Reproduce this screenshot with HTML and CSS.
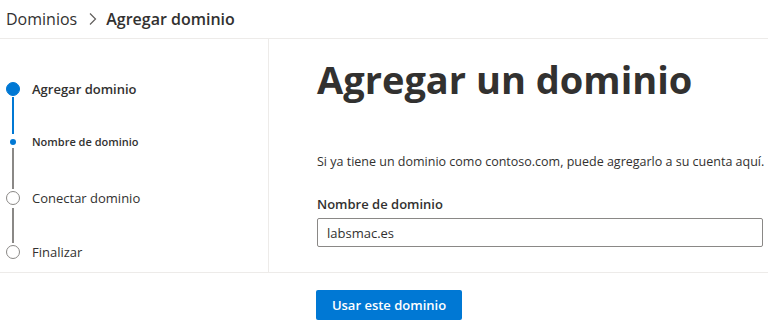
FILE: index.html
```html
<!DOCTYPE html>
<html lang="es">
<head>
    <meta charset="UTF-8">
    <meta name="viewport" content="width=device-width, initial-scale=1.0">
    <title>Agregar dominio</title>
    <link rel="stylesheet" href="styles.css">
</head>
<body>
    <div class="breadcrumb">
        <span class="crumb">Dominios</span>
        <svg class="chevron" width="10" height="14" viewBox="0 0 10 14"><path d="M2 1.5 L7.5 7 L2 12.5" fill="none" stroke="#605e5c" stroke-width="1.2"/></svg>
        <span class="crumb current">Agregar dominio</span>
    </div>

    <div class="wizard">
        <div class="steps">
            <div class="step step-1">
                <div class="marker">
                    <span class="circle filled"></span>
                    <span class="line active"></span>
                </div>
                <span class="label bold">Agregar dominio</span>
            </div>
            <div class="step step-2">
                <div class="marker">
                    <span class="dot"></span>
                    <span class="line"></span>
                </div>
                <span class="label sub">Nombre de dominio</span>
            </div>
            <div class="step step-3">
                <div class="marker">
                    <span class="circle"></span>
                    <span class="line"></span>
                </div>
                <span class="label">Conectar dominio</span>
            </div>
            <div class="step step-4">
                <div class="marker">
                    <span class="circle"></span>
                </div>
                <span class="label">Finalizar</span>
            </div>
        </div>

        <div class="content">
            <h1>Agregar un dominio</h1>
            <p class="desc">Si ya tiene un dominio como contoso.com, puede agregarlo a su cuenta aquí.</p>
            <label for="domain" class="field-label">Nombre de dominio</label>
            <input type="text" id="domain" value="labsmac.es">
        </div>
    </div>

    <div class="footer">
        <button class="primary">Usar este dominio</button>
    </div>
</body>
</html>
```

FILE: styles.css
```css
body{
    margin: 0;
    font-family: "Open Sans", "Noto Sans", Arial, sans-serif;
    color: #323130;
    background: #fff;
    overflow: hidden;
}

.breadcrumb{
    height: 38px;
    display: flex;
    align-items: center;
    padding-left: 6px;
    border-bottom: 1px solid #edebe9;
    font-size: 16px;
}
.crumb{
    color: #323130;
}
.crumb.current{
    font-weight: 600;
}
.chevron{
    margin: 0 8px 0 11px;
}

.wizard{
    display: flex;
    height: 233px;
    border-bottom: 1px solid #edebe9;
}

.steps{
    width: 269px;
    border-right: 1px solid #edebe9;
    padding-top: 43px;
    box-sizing: border-box;
}
.step{
    display: flex;
    gap: 12px;
}
.step-1{ height: 57px; }
.step-2{ height: 52px; }
.step-3{ height: 54px; }

.marker{
    width: 14px;
    margin-left: 6px;
    display: flex;
    flex-direction: column;
    align-items: center;
}
.circle{
    width: 14px;
    height: 14px;
    border-radius: 50%;
    border: 1.5px solid #8a8886;
    box-sizing: border-box;
    flex: none;
}
.circle.filled{
    background: #0078d4;
    border-color: #0078d4;
}
.dot{
    width: 6px;
    height: 6px;
    border-radius: 50%;
    background: #0078d4;
    flex: none;
}
.line{
    width: 2px;
    flex: 1;
    background: #8a8886;
    margin: 3px 0 2px;
}
.line.active{
    background: #0078d4;
    margin: 1px 0 5px;
}

.label{
    font-size: 13px;
    line-height: 14px;
    color: #323130;
}
.label.bold{
    font-weight: 600;
}
.label.sub{
    font-size: 11px;
    font-weight: 600;
    margin-top: -4px;
}

.content{
    padding-left: 48px;
    flex: 1;
}
h1{
    font-size: 38px;
    font-weight: 700;
    margin: 14px 0 0;
    line-height: 52px;
}
.desc{
    font-size: 12.5px;
    white-space: nowrap;
    margin: 48px 0 0;
}
.field-label{
    display: block;
    font-size: 13px;
    font-weight: 600;
    margin-top: 25px;
}
input{
    display: block;
    width: 446px;
    height: 29px;
    box-sizing: border-box;
    margin-top: 5px;
    border: 1px solid #8a8886;
    border-radius: 2px;
    padding: 0 9px;
    font-family: inherit;
    font-size: 13px;
    color: #323130;
}

.footer{
    padding: 17px 0 0 316px;
}
.primary{
    width: 146px;
    height: 30px;
    background: #0078d4;
    color: #fff;
    border: none;
    border-radius: 2px;
    font-family: inherit;
    font-size: 13px;
    font-weight: 600;
}
```
